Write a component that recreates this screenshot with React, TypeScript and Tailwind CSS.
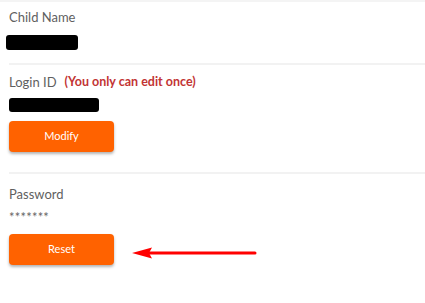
import React from "react";

const Redacted = ({ className }: { className: string }) => (
  <div className={`bg-black rounded-[3px] ${className}`} />
);

const OrangeButton = ({ label }: { label: string }) => (
  <button className="w-[105px] h-[31px] rounded-[4px] bg-[#ff6200] text-white text-[11px] shadow-[0_2px_3px_rgba(0,0,0,0.3)]">
    {label}
  </button>
);

const App: React.FC = () => {
  return (
    <div
      className="w-[425px] h-[303px] bg-white border-t-2 border-[#f4f4f4] overflow-hidden"
      style={{ fontFamily: "Lato, 'Open Sans', sans-serif" }}
    >
      {/* Child name */}
      <div className="ml-[9px] pt-[6px] pb-[13px]">
        <div className="text-[13px] leading-[18px] text-[#5f5f5f]">Child Name</div>
        <Redacted className="mt-[9px] -ml-[3px] w-[72px] h-[15px]" />
      </div>

      {/* Login ID */}
      <div className="ml-[9px] border-t-2 border-[#f2f2f2] pt-[8px] pb-[20px]">
        <div className="flex items-center gap-[8px] leading-[18px]">
          <span className="text-[13px] text-[#5f5f5f]">Login ID</span>
          <span className="text-[12.5px] font-bold text-[#c23434]">
            (You only can edit once)
          </span>
        </div>
        <Redacted className="mt-[7px] w-[90px] h-[14px]" />
        <div className="mt-[9px]">
          <OrangeButton label="Modify" />
        </div>
      </div>

      {/* Password */}
      <div className="ml-[9px] border-t-2 border-[#f2f2f2] pt-[11px]">
        <div className="text-[13px] leading-[18px] text-[#5f5f5f]">Password</div>
        <div className="mt-[8px] text-[13px] leading-[12px] text-[#666] tracking-[0.2px]">
          *******
        </div>
        <div className="mt-[11px] flex items-center">
          <OrangeButton label="Reset" />
          <svg width="126" height="14" viewBox="0 0 126 14" className="ml-[18px] mt-[6px]">
            <polygon points="0,7 20,1.5 17,7 20,12.5" fill="#ff0000" />
            <line x1="16" y1="7" x2="123" y2="7" stroke="#ff0000" strokeWidth="3" strokeLinecap="round" />
          </svg>
        </div>
      </div>
    </div>
  );
};

export default App;
